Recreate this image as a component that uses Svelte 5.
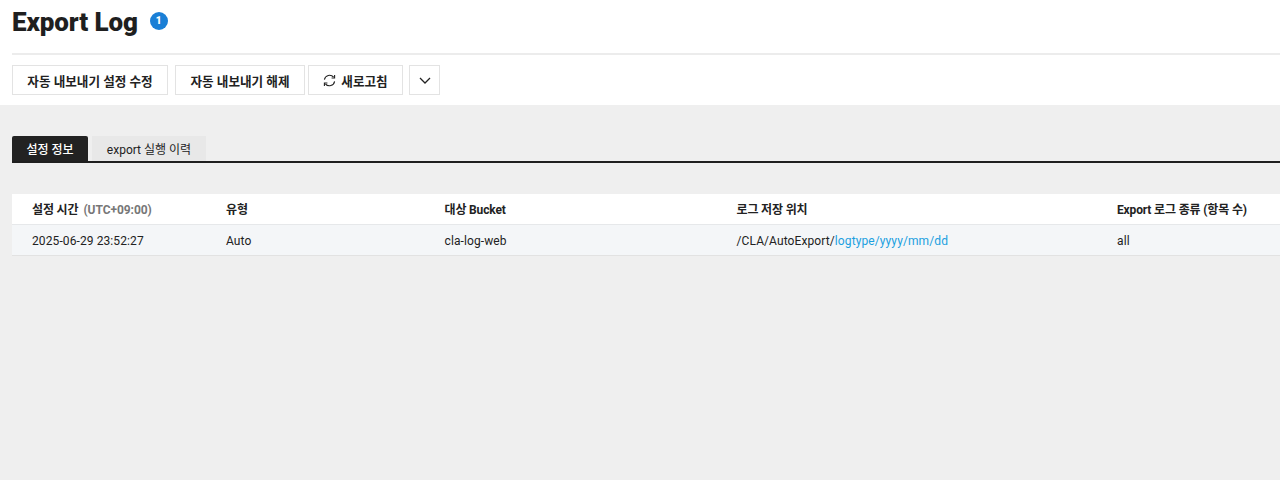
<script>
    const columns = [
        { title: '설정 시간', note: '(UTC+09:00)', width: 214 },
        { title: '유형', width: 218.5 },
        { title: '대상 Bucket', width: 292 },
        { title: '로그 저장 위치', width: 380.5 },
        { title: 'Export 로그 종류 (항목 수)', width: 163 }
    ];
</script>

<div class="page">
    <header class="top">
        <div class="title-row">
            <h1>Export Log</h1>
            <span class="count">1</span>
        </div>
        <div class="toolbar">
            <button type="button" class="btn wide">자동 내보내기 설정 수정</button>
            <button type="button" class="btn mid">자동 내보내기 해제</button>
            <button type="button" class="btn refresh">
                <svg width="13" height="13" viewBox="0 0 13 13" fill="none" stroke="#222" stroke-width="1.1">
                    <path d="M1.4 5.6A5.2 5.2 0 0 1 10.6 3.2" />
                    <path d="M11.6 1v3h-3" />
                    <path d="M11.6 7.4A5.2 5.2 0 0 1 2.4 9.8" />
                    <path d="M1.4 12V9h3" />
                </svg>
                새로고침
            </button>
            <button type="button" class="btn more" aria-label="더보기">
                <svg width="12" height="7" viewBox="0 0 12 7" fill="none" stroke="#222" stroke-width="1.3">
                    <path d="M1 1l5 5 5-5" />
                </svg>
            </button>
        </div>
    </header>

    <main class="content">
        <div class="tabs">
            <button type="button" class="tab active">설정 정보</button>
            <button type="button" class="tab">export 실행 이력</button>
        </div>

        <div class="table">
            <div class="row head">
                {#each columns as col}
                    <div class="cell" style="width: {col.width}px">{col.title}{#if col.note}<span class="note">{col.note}</span>{/if}</div>
                {/each}
            </div>
            <div class="row body">
                <div class="cell" style="width: {columns[0].width}px">2025-06-29 23:52:27</div>
                <div class="cell" style="width: {columns[1].width}px">Auto</div>
                <div class="cell" style="width: {columns[2].width}px">cla-log-web</div>
                <div class="cell" style="width: {columns[3].width}px">/CLA/AutoExport/<span class="link">logtype/yyyy/mm/dd</span></div>
                <div class="cell" style="width: {columns[4].width}px">all</div>
            </div>
        </div>
    </main>
</div>

<style>
    :global(body) {
        margin: 0;
        background: #efefef;
    }

    .page {
        width: 1280px;
        height: 480px;
        overflow: hidden;
        font-family: Roboto, "Noto Sans CJK KR", sans-serif;
        font-size: 12px;
        color: #222;
        display: flex;
        flex-direction: column;
    }

    .top {
        background: #fff;
        height: 105px;
        padding-left: 12px;
        box-sizing: border-box;
    }

    .title-row {
        height: 53px;
        border-bottom: 2px solid #ececec;
        display: flex;
        align-items: flex-start;
        gap: 12px;
    }

    h1 {
        margin: 5px 0 0;
        font-size: 26px;
        line-height: 34px;
        font-weight: 900;
        color: #1f1f1f;
        letter-spacing: -0.1px;
    }

    .count {
        margin-top: 12px;
        width: 18px;
        height: 18px;
        border-radius: 50%;
        background: #1a7fd6;
        color: #fff;
        font-size: 10px;
        font-weight: 900;
        line-height: 18px;
        text-align: center;
    }

    .toolbar {
        display: flex;
        gap: 7px;
        margin-top: 10px;
    }

    .btn {
        height: 30px;
        box-sizing: border-box;
        background: #fff;
        border: 1px solid #e3e3e3;
        padding: 0;
        font: inherit;
        font-size: 12.6px;
        font-weight: 700;
        color: #222;
        display: flex;
        align-items: center;
        justify-content: center;
        gap: 5px;
    }

    .wide { width: 156px; }
    .mid { width: 130px; }
    .refresh { width: 95px; margin-left: -4px; }
    .more { width: 31px; margin-left: -1px; }

    .content {
        flex: 1;
        padding: 31px 0 0 12px;
    }

    .tabs {
        display: flex;
        gap: 4px;
        height: 25px;
        border-bottom: 2px solid #1f1f1f;
    }

    .tab {
        height: 25px;
        border: 0;
        padding: 0 0 1px;
        font: inherit;
        background: #e8e8e8;
        color: #222;
        width: 114px;
    }

    .tab.active {
        width: 76px;
        background: #222;
        color: #fff;
        font-weight: 500;
        border-radius: 2px 2px 0 0;
    }

    .table {
        margin-top: 31px;
    }

    .row {
        display: flex;
        box-sizing: border-box;
    }

    .row.head {
        height: 31px;
        line-height: 32px;
        background: #fff;
        font-weight: 700;
        letter-spacing: -0.15px;
        border-bottom: 1px solid #e6e8ea;
    }

    .row.body {
        height: 31px;
        line-height: 32px;
        background: #f4f6f8;
        letter-spacing: 0.1px;
        border-bottom: 1px solid #e2e2e2;
    }

    .cell {
        flex: none;
        box-sizing: border-box;
        padding-left: 20px;
        white-space: pre;
    }

    .cell:not(:first-child) {
        padding-left: 0;
    }

    .note {
        margin-left: 5px;
        color: #777;
        letter-spacing: -0.05px;
    }

    .link {
        color: #1ba0e0;
    }
</style>
